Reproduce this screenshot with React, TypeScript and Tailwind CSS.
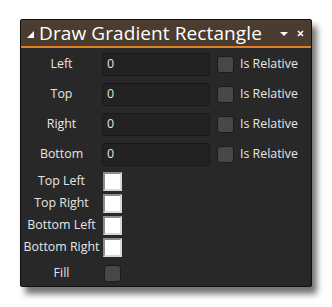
import React from "react";

const font = { fontFamily: '"Open Sans", "Noto Sans", sans-serif' };

function Check() {
  return <div className="w-[17px] h-[17px] rounded-[3px] bg-[#474747] border border-[#1c1c1c] shrink-0" />;
}

function Swatch() {
  return (
    <div className="w-[19px] h-[19px] bg-white border-2 border-t-[#8c8c8c] border-l-[#8c8c8c] border-b-[#d8d8d8] border-r-[#d8d8d8] shrink-0" />
  );
}

export default function App() {
  const rows = ["Left", "Top", "Right", "Bottom"];
  const colors = ["Top Left", "Top Right", "Bottom Left", "Bottom Right"];
  return (
    <div className="w-[332px] h-[307px] bg-white pl-[20px] pt-[19px]" style={font}>
      <div className="w-[292px] h-[268px] bg-[#282828] border border-[#101010] rounded-[2px] shadow-[5px_7px_6px_rgba(0,0,0,0.55)] flex flex-col">
        <div className="h-[26px] bg-[#4a3c2f] flex items-center pl-[6px] pr-[7px] text-white">
          <svg width="7" height="7" viewBox="0 0 7 7" className="mt-[3px]">
            <polygon points="7,0 7,7 0,7" fill="#ffffff" />
          </svg>
          <span className="ml-[5px] text-[19px] leading-none tracking-[0.1px]">Draw Gradient Rectangle</span>
          <div className="flex-1" />
          <svg width="8" height="4" viewBox="0 0 8 4" className="mt-[1px]">
            <polygon points="0,0 8,0 4,4" fill="#ffffff" />
          </svg>
          <svg width="7" height="7" viewBox="0 0 7 7" className="ml-[9px] mt-[1px]">
            <path d="M1 1 L6 6 M6 1 L1 6" stroke="#ffffff" strokeWidth="1.6" />
          </svg>
        </div>
        <div className="h-[2px] bg-[#de7f26]" />
        <div className="flex flex-col pt-[5px] text-[12.4px] text-[#e6e6e6]">
          {rows.map((r) => (
            <div key={r} className="flex items-center h-[23px] mb-[7px]">
              <div className="w-[81px] text-center leading-none">{r}</div>
              <div className="w-[108px] h-[23px] bg-[#222222] border border-[#181818] rounded-[3px] flex items-center pl-[4px] leading-none">0</div>
              <div className="ml-[7px]"><Check /></div>
              <span className="ml-[6px] leading-none">Is Relative</span>
            </div>
          ))}
          <div className="flex flex-col gap-[3px] -mt-[1px]">
            {colors.map((c) => (
              <div key={c} className="flex items-center h-[19px]">
                <div className="w-[81px] text-center leading-none whitespace-nowrap">{c}</div>
                <div className="ml-[1px]"><Swatch /></div>
              </div>
            ))}
            <div className="flex items-center h-[19px] mt-[4px]">
              <div className="w-[81px] text-center leading-none">Fill</div>
              <div className="ml-[2px]"><Check /></div>
            </div>
          </div>
        </div>
      </div>
    </div>
  );
}
